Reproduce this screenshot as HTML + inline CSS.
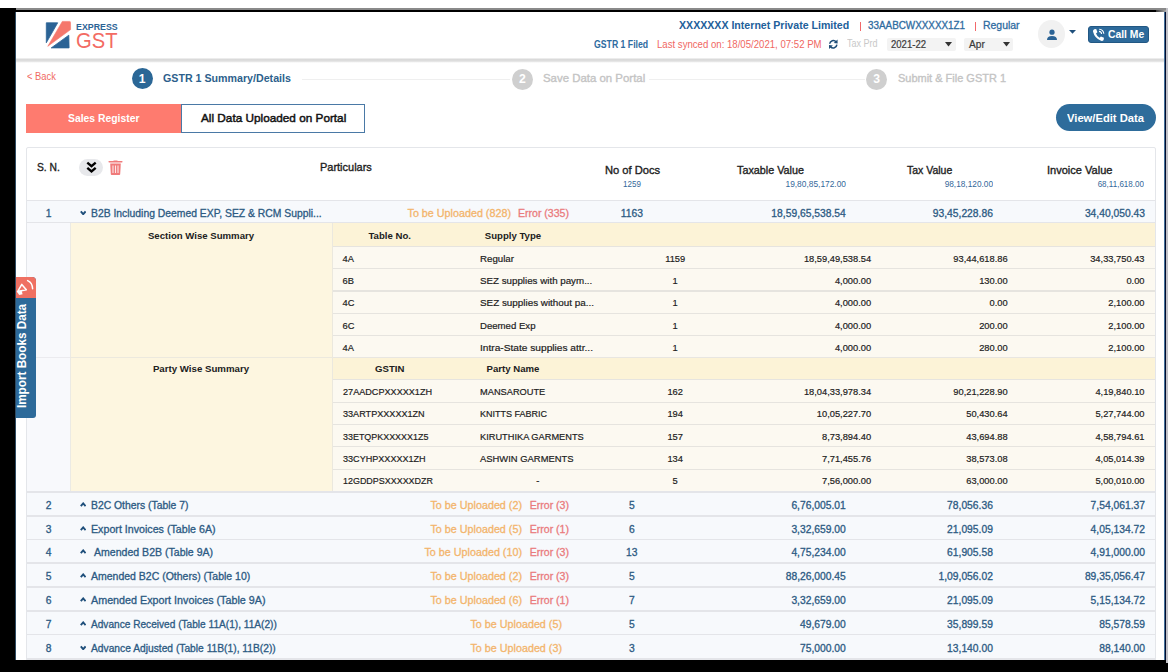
<!DOCTYPE html>
<html><head><meta charset="utf-8"><style>
html,body{margin:0;padding:0}
body{width:1175px;height:672px;position:relative;overflow:hidden;background:#fff;font-family:"Liberation Sans",sans-serif}
.a{position:absolute}
.t{position:absolute;white-space:nowrap;line-height:1}
</style></head><body>
<div class="a" style="left:0.00px;top:8.00px;width:1168.00px;height:664.00px;background:#000"></div>
<div class="a" style="left:16.00px;top:8.00px;width:1152.00px;height:1.60px;background:#8a8a8a"></div>
<div class="a" style="left:1166.00px;top:8.00px;width:2.00px;height:655.00px;background:#9a9a9a"></div>
<div class="a" style="left:15.00px;top:12.00px;width:1151.00px;height:648.00px;background:#0b1f3f"></div>
<div class="a" style="left:16.00px;top:12.00px;width:1148.60px;height:648.00px;background:#fff"></div>
<div class="a" style="left:15.00px;top:12.00px;width:1.00px;height:648.00px;background:#2f4b62"></div>
<div class="a" style="left:16.00px;top:57.50px;width:1148.60px;height:1.00px;background:#ececec"></div>
<div class="a" style="left:16.00px;top:58.50px;width:1148.60px;height:3.00px;background:linear-gradient(#d8d8d8,#dedede 60%,#ececec)"></div>
<div class="a" style="left:16.00px;top:61.50px;width:1148.60px;height:1.50px;background:linear-gradient(#f4f4f4,#fdfdfd)"></div>
<svg class="a" style="left:40px;top:16px" width="40" height="40" viewBox="40 16 40 40">
<path d="M46.3 22.8 L57.7 22.8 L46.3 42.8 Z" fill="#2b6395" stroke="#2b6395" stroke-width="0.8" stroke-linejoin="round"/>
<path d="M62.3 21.4 L69.6 21.4 Q70.5 21.4 70.5 22.4 L70.6 29.6 L47.8 46.3 Z" fill="#f5776c" stroke="#f5776c" stroke-width="0.6" stroke-linejoin="round"/>
<path d="M68.8 35.2 L69.1 47.9 L51.2 47.9 Z" fill="#2b6395" stroke="#2b6395" stroke-width="0.8" stroke-linejoin="round"/>
</svg>
<div class="t" style="left:75.60px;transform-origin:0 0;top:22.00px;font-size:9.88px;color:#2b6395;font-weight:bold;transform:scaleX(0.8931);">EXPRESS</div>
<div class="t" style="left:75.60px;transform-origin:0 0;top:30.00px;font-size:21.22px;color:#f36b63;transform:scaleX(0.9513);">GST</div>
<div class="t" style="left:679.40px;transform-origin:0 0;top:20.00px;font-size:10.61px;color:#22609a;font-weight:bold;transform:scaleX(0.9988);">XXXXXXX Internet Private Limited</div>
<div class="a" style="left:860.00px;top:21.60px;width:1.30px;height:9.60px;background:#f2686a"></div>
<div class="t" style="left:868.00px;transform-origin:0 0;top:20.00px;font-size:10.61px;color:#2e6b9f;-webkit-text-stroke:0.3px #2e6b9f;transform:scaleX(0.9303);">33AABCWXXXXX1Z1</div>
<div class="a" style="left:975.20px;top:21.60px;width:1.30px;height:9.60px;background:#f2686a"></div>
<div class="t" style="left:983.00px;transform-origin:0 0;top:20.00px;font-size:10.61px;color:#2e6b9f;-webkit-text-stroke:0.3px #2e6b9f;transform:scaleX(0.9850);">Regular</div>
<div class="t" style="left:593.80px;transform-origin:0 0;top:40.00px;font-size:10.47px;color:#2e6b9f;font-weight:bold;transform:scaleX(0.8307);">GSTR 1 Filed</div>
<div class="t" style="left:656.80px;transform-origin:0 0;top:40.00px;font-size:10.47px;color:#f0675f;transform:scaleX(0.9180);">Last synced on: 18/05/2021, 07:52 PM</div>
<svg class="a" style="left:828.4px;top:39px" width="10.6" height="10.4" viewBox="0 0 13 13">
<path d="M2.0 6.0 A4.6 4.6 0 0 1 10.0 3.4" fill="none" stroke="#1f4d78" stroke-width="1.9"/>
<path d="M11.8 0.6 L11.9 5.6 L7.0 5.0 Z" fill="#1f4d78"/>
<path d="M11.0 7.0 A4.6 4.6 0 0 1 3.0 9.6" fill="none" stroke="#1f4d78" stroke-width="1.9"/>
<path d="M1.2 12.4 L1.1 7.4 L6.0 8.0 Z" fill="#1f4d78"/>
</svg>
<div class="t" style="left:846.50px;transform-origin:0 0;top:39.00px;font-size:10.47px;color:#c8c8c8;transform:scaleX(0.8625);">Tax Prd</div>
<div class="a" style="left:887.20px;top:37.70px;width:68.50px;height:13.60px;background:#f3f3f3;border-radius:2px"></div>
<div class="t" style="left:891.00px;transform-origin:0 0;top:40.00px;font-size:10.47px;color:#3a3a3a;-webkit-text-stroke:0.2px #3a3a3a;transform:scaleX(0.9113);">2021-22</div>
<svg class="a" style="left:945px;top:41.8px" width="7" height="5" viewBox="0 0 7 5"><path d="M0 0 L7 0 L3.5 4.6 Z" fill="#333"/></svg>
<div class="a" style="left:964.30px;top:37.70px;width:48.50px;height:13.60px;background:#f3f3f3;border-radius:2px"></div>
<div class="t" style="left:968.90px;transform-origin:0 0;top:40.00px;font-size:10.47px;color:#3a3a3a;-webkit-text-stroke:0.2px #3a3a3a;transform:scaleX(0.9702);">Apr</div>
<svg class="a" style="left:1002.5px;top:41.8px" width="7" height="5" viewBox="0 0 7 5"><path d="M0 0 L7 0 L3.5 4.6 Z" fill="#333"/></svg>
<div class="a" style="left:1037.80px;top:20.40px;width:26.80px;height:27.20px;background:#f1f1f1;border-radius:50%"></div>
<svg class="a" style="left:1044.5px;top:27.6px" width="14" height="14" viewBox="0 0 14 14">
<circle cx="7" cy="4.2" r="2.6" fill="#2b6395"/>
<path d="M2 12 Q2 8 7 8 Q12 8 12 12 Z" fill="#2b6395"/>
</svg>
<svg class="a" style="left:1068.9px;top:30px" width="7" height="4" viewBox="0 0 7 4"><path d="M0 0 L7 0 L3.5 3.8 Z" fill="#1f4f7b"/></svg>
<div class="a" style="left:1088.20px;top:25.60px;width:60.80px;height:17.00px;background:#2d6a9b;border:1px solid #215783;box-sizing:border-box;border-radius:3px"></div>
<svg class="a" style="left:1091.5px;top:27.5px" width="13" height="14" viewBox="0 0 13 14">
<path d="M2.2 1.3 L4.2 1.0 L5.4 4.2 L4.0 5.4 Q5.0 8.2 7.6 9.8 L8.9 8.4 L12 9.8 L11.6 12 Q10.8 13.2 9 12.8 Q2.6 10.4 1.0 3.6 Q0.8 1.9 2.2 1.3 Z" fill="#fff"/>
<path d="M7.2 1.2 A5 5 0 0 1 11.8 5.8" fill="none" stroke="#fff" stroke-width="1.1"/>
<path d="M7.0 3.4 A2.8 2.8 0 0 1 9.6 6.0" fill="none" stroke="#fff" stroke-width="1.1"/>
</svg>
<div class="t" style="left:1108.20px;transform-origin:0 0;top:28.00px;font-size:11.63px;color:#ffffff;font-weight:bold;transform:scaleX(0.8892);">Call Me</div>
<div class="t" style="left:27.20px;transform-origin:0 0;top:72.00px;font-size:10.47px;color:#f06a62;transform:scaleX(0.8921);">&lt; Back</div>
<div class="a" style="left:302.00px;top:79.00px;width:208.00px;height:1.00px;background:#efefef"></div>
<div class="a" style="left:649.00px;top:79.00px;width:216.00px;height:1.00px;background:#efefef"></div>
<div class="a" style="left:131.70px;top:68.40px;width:21.00px;height:21.00px;background:#2b6796;border-radius:50%"></div>
<div class="t" style="left:-257.80px;width:800px;text-align:center;transform-origin:50% 0;top:73.00px;font-size:12.21px;color:#fff;font-weight:bold;">1</div>
<div class="t" style="left:162.50px;transform-origin:0 0;top:73.00px;font-size:11.05px;color:#2d5f8c;font-weight:bold;transform:scaleX(0.9645);">GSTR 1 Summary/Details</div>
<div class="a" style="left:512.00px;top:68.50px;width:21.00px;height:21.00px;background:#cfcfcf;border-radius:50%"></div>
<div class="t" style="left:122.50px;width:800px;text-align:center;transform-origin:50% 0;top:73.00px;font-size:12.21px;color:#fff;font-weight:bold;">2</div>
<div class="t" style="left:543.40px;transform-origin:0 0;top:73.00px;font-size:11.05px;color:#c4c4c4;-webkit-text-stroke:0.35px #c4c4c4;transform:scaleX(1.0337);">Save Data on Portal</div>
<div class="a" style="left:866.20px;top:68.50px;width:21.00px;height:21.00px;background:#cfcfcf;border-radius:50%"></div>
<div class="t" style="left:476.70px;width:800px;text-align:center;transform-origin:50% 0;top:73.00px;font-size:12.21px;color:#fff;font-weight:bold;">3</div>
<div class="t" style="left:897.50px;transform-origin:0 0;top:73.00px;font-size:11.05px;color:#c4c4c4;-webkit-text-stroke:0.35px #c4c4c4;transform:scaleX(0.9940);">Submit &amp; File GSTR 1</div>
<div class="a" style="left:26.20px;top:104.40px;width:154.90px;height:28.90px;background:#fe7b6f"></div>
<div class="t" style="left:68.20px;transform-origin:0 0;top:112.00px;font-size:11.63px;color:#fff;font-weight:bold;transform:scaleX(0.8921);">Sales Register</div>
<div class="a" style="left:181.10px;top:104.40px;width:183.50px;height:28.90px;background:#fff;border:1px solid #4a79a6;box-sizing:border-box"></div>
<div class="t" style="left:200.50px;transform-origin:0 0;top:113.00px;font-size:11.34px;color:#111;-webkit-text-stroke:0.45px #111;transform:scaleX(1.0392);">All Data Uploaded on Portal</div>
<div class="a" style="left:1055.70px;top:104.30px;width:100.10px;height:26.90px;background:#2e6c9b;border-radius:14px"></div>
<div class="t" style="left:1067.00px;transform-origin:0 0;top:112.00px;font-size:11.63px;color:#fff;font-weight:bold;transform:scaleX(0.9635);">View/Edit Data</div>
<div class="a" style="left:26.40px;top:147.00px;width:1130.00px;height:525.00px;background:#fff;border:1px solid #e4e6ea;border-radius:2px;box-sizing:border-box"></div>
<div class="t" style="left:37.10px;transform-origin:0 0;top:162.00px;font-size:11.05px;color:#1e1e1e;-webkit-text-stroke:0.35px #1e1e1e;transform:scaleX(0.9286);">S. N.</div>
<div class="a" style="left:79.40px;top:158.60px;width:23.70px;height:17.30px;background:#e7e8eb;border-radius:9px"></div>
<svg class="a" style="left:86px;top:161px" width="11" height="13" viewBox="0 0 11 13">
<path d="M1.3 1.6 L5.5 5.1 L9.7 1.6" fill="none" stroke="#000" stroke-width="2.4"/>
<path d="M1.3 6.9 L5.5 10.4 L9.7 6.9" fill="none" stroke="#000" stroke-width="2.4"/>
</svg>
<svg class="a" style="left:108px;top:160px" width="15" height="16" viewBox="0 0 15 16">
<path d="M1.2 1.8 L13.8 1.8" stroke="#f07b7b" stroke-width="1.6" stroke-linecap="round"/>
<path d="M5.5 1.2 L9.5 1.2" stroke="#f07b7b" stroke-width="1.4"/>
<path d="M2.2 3.4 L12.8 3.4 L12.2 14.2 Q12.1 15 11.3 15 L3.7 15 Q2.9 15 2.8 14.2 Z" fill="#f07b7b"/>
<path d="M5 5.5 L5 13 M7.5 5.5 L7.5 13 M10 5.5 L10 13" stroke="#fde8e8" stroke-width="1.1"/>
</svg>
<div class="t" style="left:320.40px;transform-origin:0 0;top:162.00px;font-size:11.05px;color:#1e1e1e;-webkit-text-stroke:0.35px #1e1e1e;transform:scaleX(0.9927);">Particulars</div>
<div class="t" style="left:604.60px;transform-origin:0 0;top:165.00px;font-size:10.76px;color:#1e1e1e;-webkit-text-stroke:0.35px #1e1e1e;transform:scaleX(1.0376);">No of Docs</div>
<div class="t" style="left:737.00px;transform-origin:0 0;top:165.00px;font-size:10.76px;color:#1e1e1e;-webkit-text-stroke:0.35px #1e1e1e;transform:scaleX(1.0034);">Taxable Value</div>
<div class="t" style="left:906.70px;transform-origin:0 0;top:165.00px;font-size:10.76px;color:#1e1e1e;-webkit-text-stroke:0.35px #1e1e1e;transform:scaleX(0.9755);">Tax Value</div>
<div class="t" style="left:1046.60px;transform-origin:0 0;top:165.00px;font-size:10.76px;color:#1e1e1e;-webkit-text-stroke:0.35px #1e1e1e;transform:scaleX(1.0270);">Invoice Value</div>
<div class="t" style="left:232.10px;width:800px;text-align:center;transform-origin:50% 0;top:180.00px;font-size:9.01px;color:#34689a;transform:scaleX(0.8929);">1259</div>
<div class="t" style="left:45.80px;width:800px;text-align:right;transform-origin:100% 0;top:180.00px;font-size:9.01px;color:#34689a;transform:scaleX(0.9302);">19,80,85,172.00</div>
<div class="t" style="left:192.90px;width:800px;text-align:right;transform-origin:100% 0;top:180.00px;font-size:9.01px;color:#34689a;transform:scaleX(0.9198);">98,18,120.00</div>
<div class="t" style="left:344.40px;width:800px;text-align:right;transform-origin:100% 0;top:180.00px;font-size:9.01px;color:#34689a;transform:scaleX(0.8932);">68,11,618.00</div>
<div class="a" style="left:27.40px;top:199.60px;width:1128.00px;height:1.40px;background:#e4e5e9"></div>
<div class="a" style="left:27.40px;top:201.00px;width:1128.00px;height:21.40px;background:#f7f9fc"></div>
<div class="t" style="left:-351.50px;width:800px;text-align:center;transform-origin:50% 0;top:209.00px;font-size:10.30px;color:#2c5a83;-webkit-text-stroke:0.3px #2c5a83;">1</div>
<svg class="a" style="left:79.50px;top:209.50px" width="6.5" height="5.6" viewBox="0 0 6.5 5.6"><path d="M0.8 1.4 L3.2 4.2 L5.6 1.4" fill="none" stroke="#1f4f7b" stroke-width="1.9"/></svg>
<div class="t" style="left:90.60px;transform-origin:0 0;top:209.00px;font-size:10.30px;color:#2c5a83;-webkit-text-stroke:0.3px #2c5a83;transform:scaleX(1.0062);">B2B Including Deemed EXP, SEZ &amp; RCM Suppli...</div>
<div class="t" style="left:-231.50px;width:800px;text-align:right;transform-origin:100% 0;top:209.00px;font-size:10.30px;color:#ea7b7d;-webkit-text-stroke:0.3px #ea7b7d;transform:scaleX(1.0260);">Error (335)</div>
<div class="t" style="left:-289.39px;width:800px;text-align:right;transform-origin:100% 0;top:209.00px;font-size:10.30px;color:#f3b56c;-webkit-text-stroke:0.3px #f3b56c;transform:scaleX(1.0450);">To be Uploaded (828)</div>
<div class="t" style="left:231.80px;width:800px;text-align:center;transform-origin:50% 0;top:209.00px;font-size:10.30px;color:#2c5a83;-webkit-text-stroke:0.3px #2c5a83;">1163</div>
<div class="t" style="left:45.80px;width:800px;text-align:right;transform-origin:100% 0;top:209.00px;font-size:10.30px;color:#2c5a83;-webkit-text-stroke:0.3px #2c5a83;">18,59,65,538.54</div>
<div class="t" style="left:192.90px;width:800px;text-align:right;transform-origin:100% 0;top:209.00px;font-size:10.30px;color:#2c5a83;-webkit-text-stroke:0.3px #2c5a83;">93,45,228.86</div>
<div class="t" style="left:345.00px;width:800px;text-align:right;transform-origin:100% 0;top:209.00px;font-size:10.30px;color:#2c5a83;-webkit-text-stroke:0.3px #2c5a83;">34,40,050.43</div>
<div class="a" style="left:27.40px;top:222.40px;width:1128.00px;height:1.00px;background:#e4e5e9"></div>
<div class="a" style="left:27.40px;top:223.40px;width:43.00px;height:267.90px;background:#f8f9fc"></div>
<div class="a" style="left:70.40px;top:223.40px;width:262.00px;height:267.90px;background:#fdf6e0"></div>
<div class="a" style="left:69.80px;top:223.40px;width:0.80px;height:267.90px;background:#ebeae4"></div>
<div class="a" style="left:332.00px;top:223.40px;width:0.80px;height:267.90px;background:#ebe8de"></div>
<div class="a" style="left:70.40px;top:357.20px;width:262.00px;height:1.00px;background:#ece9de"></div>
<div class="a" style="left:27.40px;top:357.20px;width:43.00px;height:1.00px;background:#ebebef"></div>
<div class="a" style="left:332.80px;top:223.40px;width:822.60px;height:22.90px;background:#fcf3d7"></div>
<div class="t" style="left:-198.60px;width:800px;text-align:center;transform-origin:50% 0;top:231.00px;font-size:9.88px;color:#202020;font-weight:bold;transform:scaleX(0.9724);">Section Wise Summary</div>
<div class="t" style="left:-10.30px;width:800px;text-align:center;transform-origin:50% 0;top:231.00px;font-size:9.60px;color:#202020;font-weight:bold;">Table No.</div>
<div class="t" style="left:113.00px;width:800px;text-align:center;transform-origin:50% 0;top:231.00px;font-size:9.60px;color:#202020;font-weight:bold;">Supply Type</div>
<div class="a" style="left:332.80px;top:246.30px;width:822.60px;height:22.30px;background:#fcf9f1"></div>
<div class="a" style="left:332.80px;top:245.80px;width:822.60px;height:1.20px;background:#e6e4df"></div>
<div class="t" style="left:342.60px;transform-origin:0 0;top:255.00px;font-size:9.30px;color:#202020;-webkit-text-stroke:0.18px #202020;">4A</div>
<div class="t" style="left:479.80px;transform-origin:0 0;top:255.00px;font-size:9.30px;color:#202020;-webkit-text-stroke:0.18px #202020;transform:scaleX(1.0440);">Regular</div>
<div class="t" style="left:275.20px;width:800px;text-align:center;transform-origin:50% 0;top:255.00px;font-size:9.30px;color:#202020;-webkit-text-stroke:0.18px #202020;">1159</div>
<div class="t" style="left:71.10px;width:800px;text-align:right;transform-origin:100% 0;top:255.00px;font-size:9.30px;color:#202020;-webkit-text-stroke:0.18px #202020;">18,59,49,538.54</div>
<div class="t" style="left:207.60px;width:800px;text-align:right;transform-origin:100% 0;top:255.00px;font-size:9.30px;color:#202020;-webkit-text-stroke:0.18px #202020;">93,44,618.86</div>
<div class="t" style="left:344.50px;width:800px;text-align:right;transform-origin:100% 0;top:255.00px;font-size:9.30px;color:#202020;-webkit-text-stroke:0.18px #202020;">34,33,750.43</div>
<div class="a" style="left:332.80px;top:268.60px;width:822.60px;height:22.30px;background:#fcf9f1"></div>
<div class="a" style="left:332.80px;top:268.10px;width:822.60px;height:1.20px;background:#e6e4df"></div>
<div class="t" style="left:342.60px;transform-origin:0 0;top:277.00px;font-size:9.30px;color:#202020;-webkit-text-stroke:0.18px #202020;">6B</div>
<div class="t" style="left:479.80px;transform-origin:0 0;top:277.00px;font-size:9.30px;color:#202020;-webkit-text-stroke:0.18px #202020;transform:scaleX(1.0496);">SEZ supplies with paym...</div>
<div class="t" style="left:275.20px;width:800px;text-align:center;transform-origin:50% 0;top:277.00px;font-size:9.30px;color:#202020;-webkit-text-stroke:0.18px #202020;">1</div>
<div class="t" style="left:71.10px;width:800px;text-align:right;transform-origin:100% 0;top:277.00px;font-size:9.30px;color:#202020;-webkit-text-stroke:0.18px #202020;">4,000.00</div>
<div class="t" style="left:207.60px;width:800px;text-align:right;transform-origin:100% 0;top:277.00px;font-size:9.30px;color:#202020;-webkit-text-stroke:0.18px #202020;">130.00</div>
<div class="t" style="left:344.50px;width:800px;text-align:right;transform-origin:100% 0;top:277.00px;font-size:9.30px;color:#202020;-webkit-text-stroke:0.18px #202020;">0.00</div>
<div class="a" style="left:332.80px;top:290.90px;width:822.60px;height:22.30px;background:#fcf9f1"></div>
<div class="a" style="left:332.80px;top:290.40px;width:822.60px;height:1.20px;background:#e6e4df"></div>
<div class="t" style="left:342.60px;transform-origin:0 0;top:299.00px;font-size:9.30px;color:#202020;-webkit-text-stroke:0.18px #202020;">4C</div>
<div class="t" style="left:479.80px;transform-origin:0 0;top:299.00px;font-size:9.30px;color:#202020;-webkit-text-stroke:0.18px #202020;transform:scaleX(1.0602);">SEZ supplies without pa...</div>
<div class="t" style="left:275.20px;width:800px;text-align:center;transform-origin:50% 0;top:299.00px;font-size:9.30px;color:#202020;-webkit-text-stroke:0.18px #202020;">1</div>
<div class="t" style="left:71.10px;width:800px;text-align:right;transform-origin:100% 0;top:299.00px;font-size:9.30px;color:#202020;-webkit-text-stroke:0.18px #202020;">4,000.00</div>
<div class="t" style="left:207.60px;width:800px;text-align:right;transform-origin:100% 0;top:299.00px;font-size:9.30px;color:#202020;-webkit-text-stroke:0.18px #202020;">0.00</div>
<div class="t" style="left:344.50px;width:800px;text-align:right;transform-origin:100% 0;top:299.00px;font-size:9.30px;color:#202020;-webkit-text-stroke:0.18px #202020;">2,100.00</div>
<div class="a" style="left:332.80px;top:313.20px;width:822.60px;height:22.30px;background:#fcf9f1"></div>
<div class="a" style="left:332.80px;top:312.70px;width:822.60px;height:1.20px;background:#e6e4df"></div>
<div class="t" style="left:342.60px;transform-origin:0 0;top:322.00px;font-size:9.30px;color:#202020;-webkit-text-stroke:0.18px #202020;">6C</div>
<div class="t" style="left:479.80px;transform-origin:0 0;top:322.00px;font-size:9.30px;color:#202020;-webkit-text-stroke:0.18px #202020;transform:scaleX(1.0323);">Deemed Exp</div>
<div class="t" style="left:275.20px;width:800px;text-align:center;transform-origin:50% 0;top:322.00px;font-size:9.30px;color:#202020;-webkit-text-stroke:0.18px #202020;">1</div>
<div class="t" style="left:71.10px;width:800px;text-align:right;transform-origin:100% 0;top:322.00px;font-size:9.30px;color:#202020;-webkit-text-stroke:0.18px #202020;">4,000.00</div>
<div class="t" style="left:207.60px;width:800px;text-align:right;transform-origin:100% 0;top:322.00px;font-size:9.30px;color:#202020;-webkit-text-stroke:0.18px #202020;">200.00</div>
<div class="t" style="left:344.50px;width:800px;text-align:right;transform-origin:100% 0;top:322.00px;font-size:9.30px;color:#202020;-webkit-text-stroke:0.18px #202020;">2,100.00</div>
<div class="a" style="left:332.80px;top:335.50px;width:822.60px;height:22.10px;background:#fcf9f1"></div>
<div class="a" style="left:332.80px;top:335.00px;width:822.60px;height:1.20px;background:#e6e4df"></div>
<div class="t" style="left:342.60px;transform-origin:0 0;top:344.00px;font-size:9.30px;color:#202020;-webkit-text-stroke:0.18px #202020;">4A</div>
<div class="t" style="left:479.80px;transform-origin:0 0;top:344.00px;font-size:9.30px;color:#202020;-webkit-text-stroke:0.18px #202020;transform:scaleX(1.0930);">Intra-State supplies attr...</div>
<div class="t" style="left:275.20px;width:800px;text-align:center;transform-origin:50% 0;top:344.00px;font-size:9.30px;color:#202020;-webkit-text-stroke:0.18px #202020;">1</div>
<div class="t" style="left:71.10px;width:800px;text-align:right;transform-origin:100% 0;top:344.00px;font-size:9.30px;color:#202020;-webkit-text-stroke:0.18px #202020;">4,000.00</div>
<div class="t" style="left:207.60px;width:800px;text-align:right;transform-origin:100% 0;top:344.00px;font-size:9.30px;color:#202020;-webkit-text-stroke:0.18px #202020;">280.00</div>
<div class="t" style="left:344.50px;width:800px;text-align:right;transform-origin:100% 0;top:344.00px;font-size:9.30px;color:#202020;-webkit-text-stroke:0.18px #202020;">2,100.00</div>
<div class="a" style="left:332.80px;top:357.20px;width:822.60px;height:1.00px;background:#e8e6e1"></div>
<div class="a" style="left:332.80px;top:358.20px;width:822.60px;height:21.50px;background:#fcf3d7"></div>
<div class="t" style="left:-198.60px;width:800px;text-align:center;transform-origin:50% 0;top:364.00px;font-size:9.88px;color:#202020;font-weight:bold;transform:scaleX(0.9802);">Party Wise Summary</div>
<div class="t" style="left:-10.30px;width:800px;text-align:center;transform-origin:50% 0;top:364.00px;font-size:9.60px;color:#202020;font-weight:bold;">GSTIN</div>
<div class="t" style="left:113.00px;width:800px;text-align:center;transform-origin:50% 0;top:364.00px;font-size:9.60px;color:#202020;font-weight:bold;">Party Name</div>
<div class="a" style="left:332.80px;top:379.70px;width:822.60px;height:22.30px;background:#fcf9f1"></div>
<div class="a" style="left:332.80px;top:379.20px;width:822.60px;height:1.20px;background:#e6e4df"></div>
<div class="t" style="left:342.60px;transform-origin:0 0;top:388.00px;font-size:9.30px;color:#202020;-webkit-text-stroke:0.18px #202020;transform:scaleX(0.9794);">27AADCPXXXXX1ZH</div>
<div class="t" style="left:479.80px;transform-origin:0 0;top:388.00px;font-size:9.30px;color:#202020;-webkit-text-stroke:0.18px #202020;transform:scaleX(0.9951);">MANSAROUTE</div>
<div class="t" style="left:275.20px;width:800px;text-align:center;transform-origin:50% 0;top:388.00px;font-size:9.30px;color:#202020;-webkit-text-stroke:0.18px #202020;">162</div>
<div class="t" style="left:71.10px;width:800px;text-align:right;transform-origin:100% 0;top:388.00px;font-size:9.30px;color:#202020;-webkit-text-stroke:0.18px #202020;">18,04,33,978.34</div>
<div class="t" style="left:207.60px;width:800px;text-align:right;transform-origin:100% 0;top:388.00px;font-size:9.30px;color:#202020;-webkit-text-stroke:0.18px #202020;">90,21,228.90</div>
<div class="t" style="left:344.50px;width:800px;text-align:right;transform-origin:100% 0;top:388.00px;font-size:9.30px;color:#202020;-webkit-text-stroke:0.18px #202020;">4,19,840.10</div>
<div class="a" style="left:332.80px;top:402.00px;width:822.60px;height:22.30px;background:#fcf9f1"></div>
<div class="a" style="left:332.80px;top:401.50px;width:822.60px;height:1.20px;background:#e6e4df"></div>
<div class="t" style="left:342.60px;transform-origin:0 0;top:410.00px;font-size:9.30px;color:#202020;-webkit-text-stroke:0.18px #202020;transform:scaleX(0.9777);">33ARTPXXXXX1ZN</div>
<div class="t" style="left:479.80px;transform-origin:0 0;top:410.00px;font-size:9.30px;color:#202020;-webkit-text-stroke:0.18px #202020;transform:scaleX(0.9691);">KNITTS FABRIC</div>
<div class="t" style="left:275.20px;width:800px;text-align:center;transform-origin:50% 0;top:410.00px;font-size:9.30px;color:#202020;-webkit-text-stroke:0.18px #202020;">194</div>
<div class="t" style="left:71.10px;width:800px;text-align:right;transform-origin:100% 0;top:410.00px;font-size:9.30px;color:#202020;-webkit-text-stroke:0.18px #202020;">10,05,227.70</div>
<div class="t" style="left:207.60px;width:800px;text-align:right;transform-origin:100% 0;top:410.00px;font-size:9.30px;color:#202020;-webkit-text-stroke:0.18px #202020;">50,430.64</div>
<div class="t" style="left:344.50px;width:800px;text-align:right;transform-origin:100% 0;top:410.00px;font-size:9.30px;color:#202020;-webkit-text-stroke:0.18px #202020;">5,27,744.00</div>
<div class="a" style="left:332.80px;top:424.30px;width:822.60px;height:22.40px;background:#fcf9f1"></div>
<div class="a" style="left:332.80px;top:423.80px;width:822.60px;height:1.20px;background:#e6e4df"></div>
<div class="t" style="left:342.60px;transform-origin:0 0;top:433.00px;font-size:9.30px;color:#202020;-webkit-text-stroke:0.18px #202020;transform:scaleX(0.9605);">33ETQPKXXXXX1Z5</div>
<div class="t" style="left:479.80px;transform-origin:0 0;top:433.00px;font-size:9.30px;color:#202020;-webkit-text-stroke:0.18px #202020;transform:scaleX(0.9944);">KIRUTHIKA GARMENTS</div>
<div class="t" style="left:275.20px;width:800px;text-align:center;transform-origin:50% 0;top:433.00px;font-size:9.30px;color:#202020;-webkit-text-stroke:0.18px #202020;">157</div>
<div class="t" style="left:71.10px;width:800px;text-align:right;transform-origin:100% 0;top:433.00px;font-size:9.30px;color:#202020;-webkit-text-stroke:0.18px #202020;">8,73,894.40</div>
<div class="t" style="left:207.60px;width:800px;text-align:right;transform-origin:100% 0;top:433.00px;font-size:9.30px;color:#202020;-webkit-text-stroke:0.18px #202020;">43,694.88</div>
<div class="t" style="left:344.50px;width:800px;text-align:right;transform-origin:100% 0;top:433.00px;font-size:9.30px;color:#202020;-webkit-text-stroke:0.18px #202020;">4,58,794.61</div>
<div class="a" style="left:332.80px;top:446.70px;width:822.60px;height:22.30px;background:#fcf9f1"></div>
<div class="a" style="left:332.80px;top:446.20px;width:822.60px;height:1.20px;background:#e6e4df"></div>
<div class="t" style="left:342.60px;transform-origin:0 0;top:455.00px;font-size:9.30px;color:#202020;-webkit-text-stroke:0.18px #202020;transform:scaleX(0.9756);">33CYHPXXXXX1ZH</div>
<div class="t" style="left:479.80px;transform-origin:0 0;top:455.00px;font-size:9.30px;color:#202020;-webkit-text-stroke:0.18px #202020;transform:scaleX(1.0120);">ASHWIN GARMENTS</div>
<div class="t" style="left:275.20px;width:800px;text-align:center;transform-origin:50% 0;top:455.00px;font-size:9.30px;color:#202020;-webkit-text-stroke:0.18px #202020;">134</div>
<div class="t" style="left:71.10px;width:800px;text-align:right;transform-origin:100% 0;top:455.00px;font-size:9.30px;color:#202020;-webkit-text-stroke:0.18px #202020;">7,71,455.76</div>
<div class="t" style="left:207.60px;width:800px;text-align:right;transform-origin:100% 0;top:455.00px;font-size:9.30px;color:#202020;-webkit-text-stroke:0.18px #202020;">38,573.08</div>
<div class="t" style="left:344.50px;width:800px;text-align:right;transform-origin:100% 0;top:455.00px;font-size:9.30px;color:#202020;-webkit-text-stroke:0.18px #202020;">4,05,014.39</div>
<div class="a" style="left:332.80px;top:469.00px;width:822.60px;height:22.30px;background:#fcf9f1"></div>
<div class="a" style="left:332.80px;top:468.50px;width:822.60px;height:1.20px;background:#e6e4df"></div>
<div class="t" style="left:342.60px;transform-origin:0 0;top:477.00px;font-size:9.30px;color:#202020;-webkit-text-stroke:0.18px #202020;transform:scaleX(0.9621);">12GDDPSXXXXXDZR</div>
<div class="t" style="left:137.70px;width:800px;text-align:center;transform-origin:50% 0;top:477.00px;font-size:9.30px;color:#202020;-webkit-text-stroke:0.18px #202020;">-</div>
<div class="t" style="left:275.20px;width:800px;text-align:center;transform-origin:50% 0;top:477.00px;font-size:9.30px;color:#202020;-webkit-text-stroke:0.18px #202020;">5</div>
<div class="t" style="left:71.10px;width:800px;text-align:right;transform-origin:100% 0;top:477.00px;font-size:9.30px;color:#202020;-webkit-text-stroke:0.18px #202020;">7,56,000.00</div>
<div class="t" style="left:207.60px;width:800px;text-align:right;transform-origin:100% 0;top:477.00px;font-size:9.30px;color:#202020;-webkit-text-stroke:0.18px #202020;">63,000.00</div>
<div class="t" style="left:344.50px;width:800px;text-align:right;transform-origin:100% 0;top:477.00px;font-size:9.30px;color:#202020;-webkit-text-stroke:0.18px #202020;">5,00,010.00</div>
<div class="a" style="left:27.40px;top:492.80px;width:1128.00px;height:22.40px;background:#f7f9fc"></div>
<div class="t" style="left:-351.50px;width:800px;text-align:center;transform-origin:50% 0;top:501.00px;font-size:10.30px;color:#2c5a83;-webkit-text-stroke:0.3px #2c5a83;">2</div>
<svg class="a" style="left:79.50px;top:501.80px" width="6.5" height="5.6" viewBox="0 0 6.5 5.6"><path d="M0.8 4.2 L3.2 1.4 L5.6 4.2" fill="none" stroke="#1f4f7b" stroke-width="1.9"/></svg>
<div class="t" style="left:90.60px;transform-origin:0 0;top:501.00px;font-size:10.30px;color:#2c5a83;-webkit-text-stroke:0.3px #2c5a83;transform:scaleX(1.0068);">B2C Others (Table 7)</div>
<div class="t" style="left:-231.50px;width:800px;text-align:right;transform-origin:100% 0;top:501.00px;font-size:10.30px;color:#ea7b7d;-webkit-text-stroke:0.3px #ea7b7d;transform:scaleX(1.0260);">Error (3)</div>
<div class="t" style="left:-277.64px;width:800px;text-align:right;transform-origin:100% 0;top:501.00px;font-size:10.30px;color:#f3b56c;-webkit-text-stroke:0.3px #f3b56c;transform:scaleX(1.0450);">To be Uploaded (2)</div>
<div class="t" style="left:231.80px;width:800px;text-align:center;transform-origin:50% 0;top:501.00px;font-size:10.30px;color:#2c5a83;-webkit-text-stroke:0.3px #2c5a83;">5</div>
<div class="t" style="left:45.80px;width:800px;text-align:right;transform-origin:100% 0;top:501.00px;font-size:10.30px;color:#2c5a83;-webkit-text-stroke:0.3px #2c5a83;">6,76,005.01</div>
<div class="t" style="left:192.90px;width:800px;text-align:right;transform-origin:100% 0;top:501.00px;font-size:10.30px;color:#2c5a83;-webkit-text-stroke:0.3px #2c5a83;">78,056.36</div>
<div class="t" style="left:345.00px;width:800px;text-align:right;transform-origin:100% 0;top:501.00px;font-size:10.30px;color:#2c5a83;-webkit-text-stroke:0.3px #2c5a83;">7,54,061.37</div>
<div class="a" style="left:27.40px;top:516.70px;width:1128.00px;height:22.10px;background:#f7f9fc"></div>
<div class="t" style="left:-351.50px;width:800px;text-align:center;transform-origin:50% 0;top:525.00px;font-size:10.30px;color:#2c5a83;-webkit-text-stroke:0.3px #2c5a83;">3</div>
<svg class="a" style="left:79.50px;top:525.55px" width="6.5" height="5.6" viewBox="0 0 6.5 5.6"><path d="M0.8 4.2 L3.2 1.4 L5.6 4.2" fill="none" stroke="#1f4f7b" stroke-width="1.9"/></svg>
<div class="t" style="left:90.60px;transform-origin:0 0;top:525.00px;font-size:10.30px;color:#2c5a83;-webkit-text-stroke:0.3px #2c5a83;transform:scaleX(1.0364);">Export Invoices (Table 6A)</div>
<div class="t" style="left:-231.50px;width:800px;text-align:right;transform-origin:100% 0;top:525.00px;font-size:10.30px;color:#ea7b7d;-webkit-text-stroke:0.3px #ea7b7d;transform:scaleX(1.0260);">Error (1)</div>
<div class="t" style="left:-277.64px;width:800px;text-align:right;transform-origin:100% 0;top:525.00px;font-size:10.30px;color:#f3b56c;-webkit-text-stroke:0.3px #f3b56c;transform:scaleX(1.0450);">To be Uploaded (5)</div>
<div class="t" style="left:231.80px;width:800px;text-align:center;transform-origin:50% 0;top:525.00px;font-size:10.30px;color:#2c5a83;-webkit-text-stroke:0.3px #2c5a83;">6</div>
<div class="t" style="left:45.80px;width:800px;text-align:right;transform-origin:100% 0;top:525.00px;font-size:10.30px;color:#2c5a83;-webkit-text-stroke:0.3px #2c5a83;">3,32,659.00</div>
<div class="t" style="left:192.90px;width:800px;text-align:right;transform-origin:100% 0;top:525.00px;font-size:10.30px;color:#2c5a83;-webkit-text-stroke:0.3px #2c5a83;">21,095.09</div>
<div class="t" style="left:345.00px;width:800px;text-align:right;transform-origin:100% 0;top:525.00px;font-size:10.30px;color:#2c5a83;-webkit-text-stroke:0.3px #2c5a83;">4,05,134.72</div>
<div class="a" style="left:27.40px;top:540.30px;width:1128.00px;height:22.00px;background:#f7f9fc"></div>
<div class="t" style="left:-351.50px;width:800px;text-align:center;transform-origin:50% 0;top:548.00px;font-size:10.30px;color:#2c5a83;-webkit-text-stroke:0.3px #2c5a83;">4</div>
<svg class="a" style="left:79.50px;top:549.10px" width="6.5" height="5.6" viewBox="0 0 6.5 5.6"><path d="M0.8 4.2 L3.2 1.4 L5.6 4.2" fill="none" stroke="#1f4f7b" stroke-width="1.9"/></svg>
<div class="t" style="left:94.00px;transform-origin:0 0;top:548.00px;font-size:10.30px;color:#2c5a83;-webkit-text-stroke:0.3px #2c5a83;transform:scaleX(1.0247);">Amended B2B (Table 9A)</div>
<div class="t" style="left:-231.50px;width:800px;text-align:right;transform-origin:100% 0;top:548.00px;font-size:10.30px;color:#ea7b7d;-webkit-text-stroke:0.3px #ea7b7d;transform:scaleX(1.0260);">Error (3)</div>
<div class="t" style="left:-277.64px;width:800px;text-align:right;transform-origin:100% 0;top:548.00px;font-size:10.30px;color:#f3b56c;-webkit-text-stroke:0.3px #f3b56c;transform:scaleX(1.0450);">To be Uploaded (10)</div>
<div class="t" style="left:231.80px;width:800px;text-align:center;transform-origin:50% 0;top:548.00px;font-size:10.30px;color:#2c5a83;-webkit-text-stroke:0.3px #2c5a83;">13</div>
<div class="t" style="left:45.80px;width:800px;text-align:right;transform-origin:100% 0;top:548.00px;font-size:10.30px;color:#2c5a83;-webkit-text-stroke:0.3px #2c5a83;">4,75,234.00</div>
<div class="t" style="left:192.90px;width:800px;text-align:right;transform-origin:100% 0;top:548.00px;font-size:10.30px;color:#2c5a83;-webkit-text-stroke:0.3px #2c5a83;">61,905.58</div>
<div class="t" style="left:345.00px;width:800px;text-align:right;transform-origin:100% 0;top:548.00px;font-size:10.30px;color:#2c5a83;-webkit-text-stroke:0.3px #2c5a83;">4,91,000.00</div>
<div class="a" style="left:27.40px;top:563.80px;width:1128.00px;height:22.40px;background:#f7f9fc"></div>
<div class="t" style="left:-351.50px;width:800px;text-align:center;transform-origin:50% 0;top:572.00px;font-size:10.30px;color:#2c5a83;-webkit-text-stroke:0.3px #2c5a83;">5</div>
<svg class="a" style="left:79.50px;top:572.80px" width="6.5" height="5.6" viewBox="0 0 6.5 5.6"><path d="M0.8 4.2 L3.2 1.4 L5.6 4.2" fill="none" stroke="#1f4f7b" stroke-width="1.9"/></svg>
<div class="t" style="left:90.60px;transform-origin:0 0;top:572.00px;font-size:10.30px;color:#2c5a83;-webkit-text-stroke:0.3px #2c5a83;transform:scaleX(1.0193);">Amended B2C (Others) (Table 10)</div>
<div class="t" style="left:-231.50px;width:800px;text-align:right;transform-origin:100% 0;top:572.00px;font-size:10.30px;color:#ea7b7d;-webkit-text-stroke:0.3px #ea7b7d;transform:scaleX(1.0260);">Error (3)</div>
<div class="t" style="left:-277.64px;width:800px;text-align:right;transform-origin:100% 0;top:572.00px;font-size:10.30px;color:#f3b56c;-webkit-text-stroke:0.3px #f3b56c;transform:scaleX(1.0450);">To be Uploaded (2)</div>
<div class="t" style="left:231.80px;width:800px;text-align:center;transform-origin:50% 0;top:572.00px;font-size:10.30px;color:#2c5a83;-webkit-text-stroke:0.3px #2c5a83;">5</div>
<div class="t" style="left:45.80px;width:800px;text-align:right;transform-origin:100% 0;top:572.00px;font-size:10.30px;color:#2c5a83;-webkit-text-stroke:0.3px #2c5a83;">88,26,000.45</div>
<div class="t" style="left:192.90px;width:800px;text-align:right;transform-origin:100% 0;top:572.00px;font-size:10.30px;color:#2c5a83;-webkit-text-stroke:0.3px #2c5a83;">1,09,056.02</div>
<div class="t" style="left:345.00px;width:800px;text-align:right;transform-origin:100% 0;top:572.00px;font-size:10.30px;color:#2c5a83;-webkit-text-stroke:0.3px #2c5a83;">89,35,056.47</div>
<div class="a" style="left:27.40px;top:587.70px;width:1128.00px;height:22.50px;background:#f7f9fc"></div>
<div class="t" style="left:-351.50px;width:800px;text-align:center;transform-origin:50% 0;top:596.00px;font-size:10.30px;color:#2c5a83;-webkit-text-stroke:0.3px #2c5a83;">6</div>
<svg class="a" style="left:79.50px;top:596.75px" width="6.5" height="5.6" viewBox="0 0 6.5 5.6"><path d="M0.8 4.2 L3.2 1.4 L5.6 4.2" fill="none" stroke="#1f4f7b" stroke-width="1.9"/></svg>
<div class="t" style="left:90.60px;transform-origin:0 0;top:596.00px;font-size:10.30px;color:#2c5a83;-webkit-text-stroke:0.3px #2c5a83;transform:scaleX(1.0444);">Amended Export Invoices (Table 9A)</div>
<div class="t" style="left:-231.50px;width:800px;text-align:right;transform-origin:100% 0;top:596.00px;font-size:10.30px;color:#ea7b7d;-webkit-text-stroke:0.3px #ea7b7d;transform:scaleX(1.0260);">Error (1)</div>
<div class="t" style="left:-277.64px;width:800px;text-align:right;transform-origin:100% 0;top:596.00px;font-size:10.30px;color:#f3b56c;-webkit-text-stroke:0.3px #f3b56c;transform:scaleX(1.0450);">To be Uploaded (6)</div>
<div class="t" style="left:231.80px;width:800px;text-align:center;transform-origin:50% 0;top:596.00px;font-size:10.30px;color:#2c5a83;-webkit-text-stroke:0.3px #2c5a83;">7</div>
<div class="t" style="left:45.80px;width:800px;text-align:right;transform-origin:100% 0;top:596.00px;font-size:10.30px;color:#2c5a83;-webkit-text-stroke:0.3px #2c5a83;">3,32,659.00</div>
<div class="t" style="left:192.90px;width:800px;text-align:right;transform-origin:100% 0;top:596.00px;font-size:10.30px;color:#2c5a83;-webkit-text-stroke:0.3px #2c5a83;">21,095.09</div>
<div class="t" style="left:345.00px;width:800px;text-align:right;transform-origin:100% 0;top:596.00px;font-size:10.30px;color:#2c5a83;-webkit-text-stroke:0.3px #2c5a83;">5,15,134.72</div>
<div class="a" style="left:27.40px;top:611.70px;width:1128.00px;height:22.10px;background:#f7f9fc"></div>
<div class="t" style="left:-351.50px;width:800px;text-align:center;transform-origin:50% 0;top:620.00px;font-size:10.30px;color:#2c5a83;-webkit-text-stroke:0.3px #2c5a83;">7</div>
<svg class="a" style="left:79.50px;top:620.55px" width="6.5" height="5.6" viewBox="0 0 6.5 5.6"><path d="M0.8 4.2 L3.2 1.4 L5.6 4.2" fill="none" stroke="#1f4f7b" stroke-width="1.9"/></svg>
<div class="t" style="left:90.60px;transform-origin:0 0;top:620.00px;font-size:10.30px;color:#2c5a83;-webkit-text-stroke:0.3px #2c5a83;transform:scaleX(0.9825);">Advance Received (Table 11A(1), 11A(2))</div>
<div class="t" style="left:-238.00px;width:800px;text-align:right;transform-origin:100% 0;top:620.00px;font-size:10.30px;color:#f3b56c;-webkit-text-stroke:0.3px #f3b56c;transform:scaleX(1.0450);">To be Uploaded (5)</div>
<div class="t" style="left:231.80px;width:800px;text-align:center;transform-origin:50% 0;top:620.00px;font-size:10.30px;color:#2c5a83;-webkit-text-stroke:0.3px #2c5a83;">5</div>
<div class="t" style="left:45.80px;width:800px;text-align:right;transform-origin:100% 0;top:620.00px;font-size:10.30px;color:#2c5a83;-webkit-text-stroke:0.3px #2c5a83;">49,679.00</div>
<div class="t" style="left:192.90px;width:800px;text-align:right;transform-origin:100% 0;top:620.00px;font-size:10.30px;color:#2c5a83;-webkit-text-stroke:0.3px #2c5a83;">35,899.59</div>
<div class="t" style="left:345.00px;width:800px;text-align:right;transform-origin:100% 0;top:620.00px;font-size:10.30px;color:#2c5a83;-webkit-text-stroke:0.3px #2c5a83;">85,578.59</div>
<div class="a" style="left:27.40px;top:635.30px;width:1128.00px;height:22.90px;background:#f7f9fc"></div>
<div class="t" style="left:-351.50px;width:800px;text-align:center;transform-origin:50% 0;top:644.00px;font-size:10.30px;color:#2c5a83;-webkit-text-stroke:0.3px #2c5a83;">8</div>
<svg class="a" style="left:79.50px;top:644.55px" width="6.5" height="5.6" viewBox="0 0 6.5 5.6"><path d="M0.8 1.4 L3.2 4.2 L5.6 1.4" fill="none" stroke="#1f4f7b" stroke-width="1.9"/></svg>
<div class="t" style="left:90.60px;transform-origin:0 0;top:644.00px;font-size:10.30px;color:#2c5a83;-webkit-text-stroke:0.3px #2c5a83;transform:scaleX(0.9952);">Advance Adjusted (Table 11B(1), 11B(2))</div>
<div class="t" style="left:-238.00px;width:800px;text-align:right;transform-origin:100% 0;top:644.00px;font-size:10.30px;color:#f3b56c;-webkit-text-stroke:0.3px #f3b56c;transform:scaleX(1.0450);">To be Uploaded (3)</div>
<div class="t" style="left:231.80px;width:800px;text-align:center;transform-origin:50% 0;top:644.00px;font-size:10.30px;color:#2c5a83;-webkit-text-stroke:0.3px #2c5a83;">3</div>
<div class="t" style="left:45.80px;width:800px;text-align:right;transform-origin:100% 0;top:644.00px;font-size:10.30px;color:#2c5a83;-webkit-text-stroke:0.3px #2c5a83;">75,000.00</div>
<div class="t" style="left:192.90px;width:800px;text-align:right;transform-origin:100% 0;top:644.00px;font-size:10.30px;color:#2c5a83;-webkit-text-stroke:0.3px #2c5a83;">13,140.00</div>
<div class="t" style="left:345.00px;width:800px;text-align:right;transform-origin:100% 0;top:644.00px;font-size:10.30px;color:#2c5a83;-webkit-text-stroke:0.3px #2c5a83;">88,140.00</div>
<div class="a" style="left:27.40px;top:491.30px;width:1128.00px;height:1.50px;background:#e4e5e9"></div>
<div class="a" style="left:27.40px;top:515.20px;width:1128.00px;height:1.50px;background:#e4e5e9"></div>
<div class="a" style="left:27.40px;top:538.80px;width:1128.00px;height:1.50px;background:#e4e5e9"></div>
<div class="a" style="left:27.40px;top:562.30px;width:1128.00px;height:1.50px;background:#e4e5e9"></div>
<div class="a" style="left:27.40px;top:586.20px;width:1128.00px;height:1.50px;background:#e4e5e9"></div>
<div class="a" style="left:27.40px;top:610.20px;width:1128.00px;height:1.50px;background:#e4e5e9"></div>
<div class="a" style="left:27.40px;top:633.80px;width:1128.00px;height:1.50px;background:#e4e5e9"></div>
<div class="a" style="left:27.40px;top:658.20px;width:1128.00px;height:1.50px;background:#e4e5e9"></div>
<div class="a" style="left:16.00px;top:277.40px;width:20.10px;height:140.40px;background:#2d6a9a;border-radius:0 4px 3px 0"></div>
<div class="a" style="left:16.00px;top:277.40px;width:20.10px;height:20.60px;background:#ef7062;border-radius:0 4px 0 0"></div>
<svg class="a" style="left:12px;top:274px" width="24" height="26" viewBox="0 0 24 26">
<path d="M9.8 10.4 L14.3 15.8 L5.6 17.6 Z" fill="none" stroke="#fff" stroke-width="1.5" stroke-linejoin="round"/>
<path d="M4.6 17.2 L9.6 16.4 L10.6 20.2 L7.2 21.0 Z" fill="#fff"/>
<path d="M15.6 6.6 Q20.4 8.6 20.6 14.8" fill="none" stroke="#fff" stroke-width="1.5" stroke-linecap="round"/>
</svg>
<div class="t" style="left:-76.60px;top:349.54px;width:200px;text-align:center;font-size:11.92px;color:#fff;font-weight:bold;transform:rotate(-90deg) scaleX(0.9843);line-height:11.92px">Import Books Data</div>
<div class="a" style="left:0.00px;top:660.00px;width:1168.00px;height:12.00px;background:#000"></div>
<div class="a" style="left:1156.00px;top:9.60px;width:10.00px;height:2.40px;background:linear-gradient(90deg,#3a3a3a,#a8a8a8)"></div>
<div class="a" style="left:1163.60px;top:12.00px;width:1.30px;height:648.00px;background:#44709a"></div>
<div class="a" style="left:1164.90px;top:12.00px;width:1.10px;height:648.00px;background:#000b2e"></div>
<div class="a" style="left:1166.00px;top:8.00px;width:2.00px;height:655.00px;background:#c2c2c8"></div>
</body></html>
